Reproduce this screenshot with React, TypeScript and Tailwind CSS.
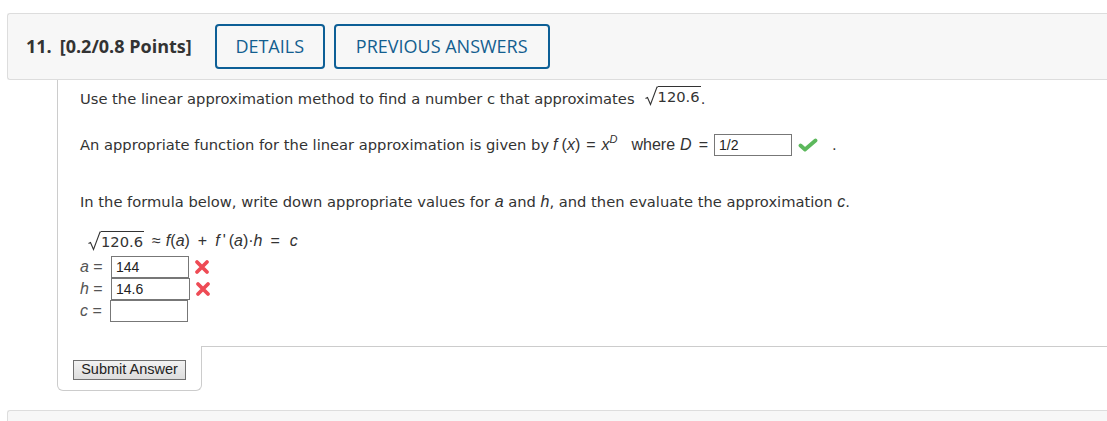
import React from "react";

const body = { fontFamily: '"DejaVu Sans", Verdana, sans-serif' };
const math = { fontFamily: '"Liberation Sans", Arial, sans-serif' };

function Sqrt({ children }: { children: React.ReactNode }) {
  return (
    <span className="inline-flex items-end">
      <svg width="13" height="20" viewBox="0 0 13 20" className="block">
        <path d="M0.5 12.5 L2.5 11.5 L5.5 18.5 L12 1 L13 1" fill="none" stroke="#333" strokeWidth="1.1" />
      </svg>
      <span className="border-t border-[#333] leading-[18px] pt-[1px] pr-[1px]">{children}</span>
    </span>
  );
}

function Check() {
  return (
    <svg width="20" height="16" viewBox="0 0 20 16" className="block">
      <path d="M2.5 8.5 L7 12.5 L17.5 3.5" fill="none" stroke="#5cb85c" strokeWidth="3.8" strokeLinecap="round" strokeLinejoin="round" />
    </svg>
  );
}

function Cross() {
  return (
    <svg width="16" height="16" viewBox="0 0 16 16" className="block">
      <path d="M3 3 L13 13 M13 3 L3 13" fill="none" stroke="#ee4b55" strokeWidth="3.8" strokeLinecap="round" />
    </svg>
  );
}

function Field({ value, w = 78 }: { value: string; w?: number }) {
  return (
    <div
      className="h-[22px] border border-[#777] bg-white flex items-center pl-[4px] text-[14px] text-[#222]"
      style={{ width: w, ...math }}
    >
      {value}
    </div>
  );
}

export default function App() {
  return (
    <div className="w-[1107px] h-[421px] overflow-hidden bg-white text-[#333]" style={body}>
      <div className="h-[13px]" />
      <div
        className="ml-[7px] h-[67px] bg-[#f7f7f7] border border-r-0 border-[#dddddd] rounded-l-[3px] flex items-center pl-[18px]"
        style={{ fontFamily: '"Open Sans", sans-serif' }}
      >
        <span className="font-bold text-[18px] text-[#333]">11.</span>
        <span className="font-bold text-[18px] text-[#333] ml-[8px]">[0.2/0.8 Points]</span>
        <div className="ml-[23px] h-[45px] w-[110px] border-2 border-[#0d5f96] rounded-[4px] flex items-center justify-center text-[18px] text-[#135e8f] font-medium">
          DETAILS
        </div>
        <div className="ml-[9px] h-[45px] w-[216px] border-2 border-[#0d5f96] rounded-[4px] flex items-center justify-center text-[18px] text-[#135e8f] font-medium">
          PREVIOUS ANSWERS
        </div>
      </div>

      <div className="ml-[57px] h-[266px] border-l border-[#cccccc] pl-[22px] pt-[9px] text-[14.7px]">
        <div className="h-[20px] flex items-center">
          <span>Use the linear approximation method to find a number c that approximates</span>
          <span className="ml-[10px]">
            <Sqrt>120.6</Sqrt>
          </span>
          <span>.</span>
        </div>

        <div className="h-[22px] mt-[25px] flex items-center">
          <span>An appropriate function for the linear approximation is given by</span>
          <span className="ml-[4px] text-[16px] whitespace-nowrap" style={math}>
            <i>f</i>
            <span className="ml-[4px]">(</span>
            <i>x</i>
            <span>)</span>
            <span className="mx-[6px]">=</span>
            <i>x</i>
            <sup className="text-[11px] top-[-7px]">
              <i>D</i>
            </sup>
            <span className="ml-[14px]">where</span>
            <i className="ml-[5px]">D</i>
            <span className="ml-[7px]">=</span>
          </span>
          <span className="ml-[6px]">
            <Field value="1/2" />
          </span>
          <span className="ml-[6px]">
            <Check />
          </span>
          <span className="ml-[14px]">.</span>
        </div>

        <div className="h-[20px] mt-[36px] flex items-center">
          <span>
            In the formula below, write down appropriate values for{" "}
            <i style={math} className="text-[16px]">a</i> and{" "}
            <i style={math} className="text-[16px]">h</i>, and then evaluate the approximation{" "}
            <i style={math} className="text-[16px]">c</i>.
          </span>
        </div>

        <div className="h-[22px] mt-[18px] flex items-center pl-[8px]">
          <Sqrt>120.6</Sqrt>
          <span className="ml-[8px] text-[16px] flex items-center" style={math}>
            <span>≈</span>
            <i className="ml-[5px]">f</i>
            <span>(</span>
            <i>a</i>
            <span>)</span>
            <span className="mx-[8px]">+</span>
            <i>f</i>
            <span className="ml-[3px]">'</span>
            <span className="ml-[3px]">(</span>
            <i>a</i>
            <span>)·</span>
            <i>h</i>
            <span className="mx-[8px]">=</span>
            <i className="ml-[2px]">c</i>
          </span>
        </div>

        <div className="mt-[4px]">
          <div className="h-[22px] flex items-center">
            <span className="w-[31px] text-[16px] text-[#555]" style={math}>
              <i>a</i> =
            </span>
            <Field value="144" />
            <span className="ml-[5px]">
              <Cross />
            </span>
          </div>
          <div className="h-[22px] flex items-center">
            <span className="w-[31px] text-[16px] text-[#555]" style={math}>
              <i>h</i> =
            </span>
            <Field value="14.6" w={79} />
            <span className="ml-[5px]">
              <Cross />
            </span>
          </div>
          <div className="h-[22px] flex items-center">
            <span className="w-[30px] text-[16px] text-[#555]" style={math}>
              <i>c</i> =
            </span>
            <Field value="" w={78} />
          </div>
        </div>
      </div>

      <div className="flex">
        <div className="ml-[57px] w-[145px] h-[45px] border-l border-b border-r border-[#cccccc] rounded-b-[6px] pl-[15px] pt-[14px]">
          <div
            className="h-[20px] w-[113px] border border-[#707070] bg-gradient-to-b from-[#f2f2f2] to-[#dddddd] flex items-center justify-center text-[14.5px] text-[#222]"
            style={math}
          >
            Submit Answer
          </div>
        </div>
        <div className="flex-1 border-t border-[#cccccc]" />
      </div>

      <div className="ml-[7px] mt-[19px] h-[20px] bg-[#f7f7f7] border-t border-l border-[#dddddd] rounded-tl-[3px]" />
    </div>
  );
}
